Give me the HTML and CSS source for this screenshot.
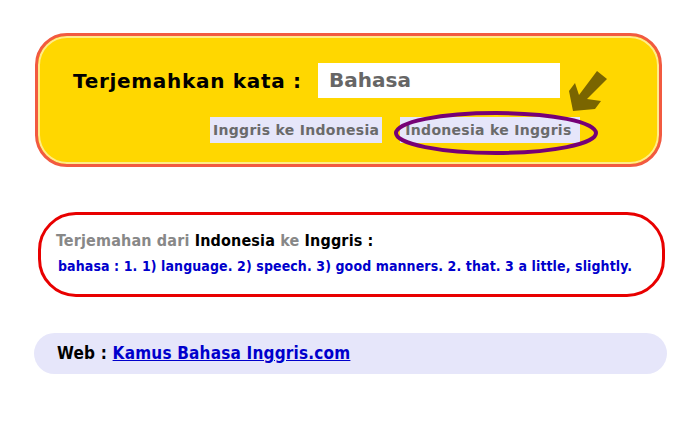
FILE: index.html
```html
<!DOCTYPE html>
<html>
<head>
<meta charset="utf-8">
<link rel="stylesheet" href="styles.css">
</head>
<body>
<div class="page">
  <div class="search">
    <div class="row1">
      <span class="label">Terjemahkan kata :</span>
      <div class="input">Bahasa</div>
    </div>
    <div class="row2">
      <span class="btn">Inggris ke Indonesia</span>
      <span class="btn btn2">Indonesia ke Inggris</span>
    </div>
    <svg class="ellipse" width="206" height="46" viewBox="0 0 206 46"><ellipse cx="103" cy="23" rx="100" ry="20" fill="none" stroke="#760076" stroke-width="4"/></svg>
    <svg class="arrow" width="42" height="44" viewBox="0 0 42 44"><path d="M30 2 L40 10 L20 30 L34 32 L28 40 L6 42 L2 22 L8 14 L12 26 Z" fill="#7a6500"/></svg>
  </div>
  <div class="result">
    <div class="r1"><span class="g">Terjemahan dari</span> Indonesia <span class="g">ke</span> Inggris :</div>
    <div class="r2">bahasa : 1. 1) language. 2) speech. 3) good manners. 2. that. 3 a little, slightly.</div>
  </div>
  <div class="footer">
    <span class="web">Web :</span> <a href="#">Kamus Bahasa Inggris.com</a>
  </div>
</div>
</body>
</html>
```
FILE: styles.css
```css
html, body { margin: 0; padding: 0; background: #fff; }
.page { padding-top: 33px; display: flex; flex-direction: column; }
.search {
  position: relative;
  margin-left: 35px;
  width: 627px;
  height: 134px;
  box-sizing: border-box;
  background: #ffd700;
  border: 3px solid #f25a40;
  border-radius: 32px;
  box-shadow: inset 0 0 0 2px #ffec8a;
  display: flex;
  flex-direction: column;
  padding: 27px 0 0 35px;
}
.row1 { display: flex; align-items: center; }
.label {
  font-family: "DejaVu Sans", Verdana, sans-serif;
  font-weight: bold;
  font-size: 20px;
  letter-spacing: 0.7px;
  color: #000;
  width: 245px;
}
.input {
  width: 242px;
  height: 35px;
  background: #fff;
  box-sizing: border-box;
  padding-left: 11px;
  font-family: "DejaVu Sans", Verdana, sans-serif;
  font-weight: bold;
  font-size: 20px;
  line-height: 35px;
  color: #666;
}
.row2 { display: flex; gap: 18px; margin-top: 19px; margin-left: 137px; }
.btn {
  background: #e6e6fa;
  height: 26px;
  line-height: 26px;
  padding: 0 3px;
  font-family: "DejaVu Sans", Verdana, sans-serif;
  font-weight: bold;
  font-size: 14px;
  letter-spacing: 0.3px;
  color: #6a6a6a;
}
.btn2 { padding: 0 8px 0 5px; }
.ellipse { position: absolute; left: 355px; top: 74px; }
.arrow { position: absolute; left: 529px; top: 33px; }
.result {
  margin-top: 45px;
  margin-left: 38px;
  width: 627px;
  height: 85px;
  box-sizing: border-box;
  border: 3px solid #e80000;
  border-radius: 38px;
  background: #fff;
  padding: 16px 0 0 15px;
  font-family: "DejaVu Sans Condensed", "DejaVu Sans", sans-serif;
  font-weight: bold;
}
.r1 { font-size: 16px; letter-spacing: 0.15px; color: #000; }
.g { color: #888; }
.r2 { font-size: 14px; letter-spacing: 0.1px; color: #0000cc; margin-top: 8px; margin-left: 2px; }
.footer {
  margin-top: 36px;
  margin-left: 34px;
  width: 633px;
  height: 41px;
  box-sizing: border-box;
  background: #e6e6fa;
  border-radius: 21px;
  padding: 10px 0 0 23px;
  font-family: "DejaVu Sans Condensed", "DejaVu Sans", sans-serif;
  font-weight: bold;
  font-size: 17px;
  letter-spacing: 0.2px;
}
.web { color: #000; }
.footer a { color: #0000cc; text-decoration: underline; }
```
